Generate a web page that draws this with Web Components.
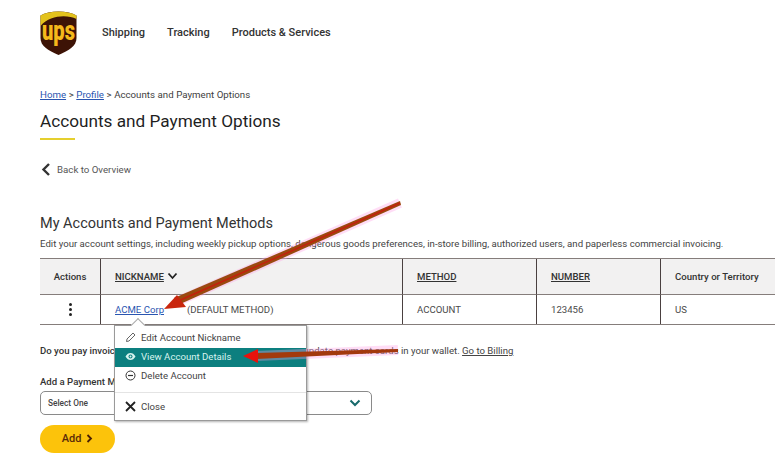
<!DOCTYPE html>
<html lang="en">
<head>
<meta charset="utf-8">
<title>Accounts and Payment Options</title>
<style>
  html, body { margin: 0; padding: 0; background: #fff; overflow: hidden; }
  body { font-family: Roboto, "Liberation Sans", sans-serif; color: #404040; position: relative; width: 775px; height: 476px; }
</style>
</head>
<body>
<ups-header></ups-header>
<page-heading></page-heading>
<accounts-section></accounts-section>
<payment-form></payment-form>
<action-menu></action-menu>
<arrow-overlay></arrow-overlay>

<script>
class UpsHeader extends HTMLElement {
  connectedCallback() {
    this.attachShadow({ mode: 'open' });
    this.shadowRoot.innerHTML = `
      <style>
        :host { display: flex; align-items: center; height: 64px; padding-left: 40px; box-sizing: border-box; }
        svg { width: 37px; height: 44px; margin-top: 1px; flex: none; overflow: visible; }
        nav { display: flex; gap: 22px; margin-left: 25px; font-size: 11px; font-weight: 500; color: #333; }
      </style>
      <svg viewBox="0 0 37 44">
        <path d="M18.500 0.500C11 0.500 5 2 0.500 4.500V27C0.500 35 8 39.500 18.500 44C29 39.500 36.500 35 36.500 27V4.500C32 2 26 0.500 18.500 0.500Z" fill="#3d1306"/>
        <path d="M0.500 4.500C6 1.500 12 0.500 18.500 0.500C25 0.500 31 1.500 36.500 4.500V8C27 3.500 10 4 0.500 15Z" fill="#e3c21c"/>
        <text x="18.500" y="29" text-anchor="middle" font-family="Roboto, sans-serif" font-weight="900" font-size="28" textLength="33" lengthAdjust="spacingAndGlyphs" fill="#f5b81b">ups</text>
      </svg>
      <nav><span>Shipping</span><span>Tracking</span><span>Products &amp; Services</span></nav>
    `;
  }
}

class PageHeading extends HTMLElement {
  connectedCallback() {
    this.attachShadow({ mode: 'open' });
    this.shadowRoot.innerHTML = `
      <style>
        :host { display: block; padding: 24px 0 0 40px; }
        .crumbs { font-size: 9.700px; line-height: 14px; color: #404040; word-spacing: .15px; }
        a { color: #2a55b0; text-decoration: underline; }
        h1 { margin: 6px 0 0; font-size: 17.200px; font-weight: 400; line-height: 26px; color: #1f1f1f; }
        .rule { width: 35px; height: 1.500px; background: #e5cf2e; margin-top: 4px; }
        .back { display: flex; align-items: center; gap: 6px; margin-top: 23px; font-size: 9.700px; line-height: 14px; color: #555; }
        .back svg { width: 10px; height: 13px; margin-left: 1px; }
      </style>
      <div class="crumbs"><a>Home</a> &gt; <a>Profile</a> &gt; Accounts and Payment Options</div>
      <h1>Accounts and Payment Options</h1>
      <div class="rule"></div>
      <div class="back">
        <svg viewBox="0 0 10 13"><path d="M8 1 2.500 6.500 8 12" fill="none" stroke="#333" stroke-width="2.400"/></svg>
        <span>Back to Overview</span>
      </div>
    `;
  }
}

class AccountsSection extends HTMLElement {
  connectedCallback() {
    this.attachShadow({ mode: 'open' });
    this.shadowRoot.innerHTML = `
      <style>
        :host { display: block; padding-top: 37px; margin-left: 40px; }
        h2 { margin: 0; font-size: 14.500px; font-weight: 400; line-height: 20px; color: #333; }
        p { margin: 3px 0 0; font-size: 9.650px; line-height: 14px; color: #444; white-space: nowrap; }
        .table {
          display: grid; grid-template-columns: 60px 302px 134px 124px 115px;
          grid-template-rows: 36px 29px; margin-top: 7px; width: 735px;
          border-top: 1px solid #857d7b; border-bottom: 1px solid #857d7b;
          font-size: 9.600px;
        }
        .cell { display: flex; align-items: center; padding-left: 14px; color: #4a4a4a; box-sizing: border-box; border-left: 1px solid #4a4040; }
        .cell:nth-child(5n+1) { border-left: 0; padding-left: 0; justify-content: center; }
        .head { background: #f2f1f1; font-weight: 500; color: #333; border-bottom: 1px solid #857d7b; }
        .sort { text-decoration: underline; }
        .head svg { width: 11px; height: 8px; margin-left: 3px; }
        a { color: #2a55b0; text-decoration: underline; }
        .note { margin-left: 23px; }
        .dots { display: flex; flex-direction: column; gap: 2px; }
        .dots i { width: 3px; height: 3px; border-radius: 50%; background: #222; }
      </style>
      <h2>My Accounts and Payment Methods</h2>
      <p>Edit your account settings, including weekly pickup options, dangerous goods preferences, in-store billing, authorized users, and paperless commercial invoicing.</p>
      <div class="table">
        <div class="cell head">Actions</div>
        <div class="cell head"><span class="sort">NICKNAME</span><svg viewBox="0 0 11 8"><path d="M1.500 1.500 5.500 6l4-4.500" fill="none" stroke="#222" stroke-width="1.800"/></svg></div>
        <div class="cell head"><span class="sort">METHOD</span></div>
        <div class="cell head"><span class="sort">NUMBER</span></div>
        <div class="cell head">Country or Territory</div>
        <div class="cell"><span class="dots"><i></i><i></i><i></i></span></div>
        <div class="cell"><a>ACME Corp</a><span class="note">(DEFAULT METHOD)</span></div>
        <div class="cell">ACCOUNT</div>
        <div class="cell">123456</div>
        <div class="cell">US</div>
      </div>
    `;
  }
}

class PaymentForm extends HTMLElement {
  connectedCallback() {
    this.attachShadow({ mode: 'open' });
    this.shadowRoot.innerHTML = `
      <style>
        :host { display: block; padding: 19px 0 0 40px; font-size: 9.600px; }
        .note { line-height: 14px; color: #444; white-space: nowrap; }
        .note b { font-weight: 500; color: #333; }
        .note u { color: #444; }
        label { display: block; margin-top: 17px; line-height: 14px; font-weight: 500; color: #333; }
        .select {
          display: flex; align-items: center; justify-content: space-between; width: 332px; height: 24px;
          margin-top: 2px; padding: 0 10px 0 7px; box-sizing: border-box;
          border: 1px solid #8a8a8a; border-radius: 5px; font-size: 8.300px; font-weight: 500; color: #444;
        }
        .select svg { width: 12px; height: 8px; }
        button {
          display: flex; align-items: center; justify-content: center; gap: 5px; width: 75px; height: 28px;
          margin-top: 10px; padding: 0; border: 0; border-radius: 14px; background: #fcc30b;
          font: 500 11px Roboto, sans-serif; color: #5a2a08;
        }
        button svg { width: 7px; height: 9px; }
      </style>
      <div class="note"><b>Do you pay invoices with a credit card?</b> You can add, edit, and update payment cards in your wallet. <u>Go to Billing</u></div>
      <label>Add a Payment Method</label>
      <div class="select"><span>Select One</span><svg viewBox="0 0 12 8"><path d="M1.500 1.500 6 6l4.500-4.500" fill="none" stroke="#17696b" stroke-width="2"/></svg></div>
      <button>Add <svg viewBox="0 0 7 9"><path d="M1.500 1 5 4.500 1.500 8" fill="none" stroke="#4a1f05" stroke-width="1.800"/></svg></button>
    `;
  }
}

class ActionMenu extends HTMLElement {
  connectedCallback() {
    this.attachShadow({ mode: 'open' });
    this.shadowRoot.innerHTML = `
      <style>
        :host {
          position: absolute; left: 114px; top: 325px; width: 193px; height: 96px; box-sizing: border-box;
          background: #fff; border: 1px solid #9a9a9a; box-shadow: 1px 1px 2px rgba(0,0,0,.3);
          font-size: 9.600px; color: #444; display: flex; flex-direction: column; padding-top: 3px;
        }
        .caret {
          position: absolute; left: 18px; top: -6px; width: 9px; height: 9px; background: #fff;
          border-left: 1px solid #aaa; border-top: 1px solid #aaa; transform: rotate(45deg);
        }
        .item { display: flex; align-items: center; gap: 5px; height: 19px; padding: 0 0 2px 10px; box-sizing: border-box; position: relative; }
        .item svg { width: 11px; height: 11px; flex: none; }
        .on { background: #0c7f7f; color: #d8f4ef; }
        hr { border: 0; border-top: 1px solid #e4e4e4; margin: 6px 0 5px; }
      </style>
      <div class="caret"></div>
      <div class="item"><svg viewBox="0 0 11 11"><path d="M1.500 9.500 2 7 8 1l2 2-6 6z" fill="none" stroke="#555" stroke-width=".9"/></svg>Edit Account Nickname</div>
      <div class="item on"><svg viewBox="0 0 11 11"><path d="M.5 5.500C2 3 3.500 2 5.500 2s3.500 1 5 3.500C9 8 7.500 9 5.500 9s-3.500-1-5-3.500z" fill="#d8f4ef"/><circle cx="5.500" cy="5.500" r="2" fill="#0c7f7f"/><circle cx="5.500" cy="5.500" r="1" fill="#d8f4ef"/></svg>View Account Details</div>
      <div class="item"><svg viewBox="0 0 11 11"><circle cx="5.500" cy="5.500" r="4.500" fill="none" stroke="#333" stroke-width="1"/><path d="M3 5.500h5" stroke="#333" stroke-width="1.200"/></svg>Delete Account</div>
      <hr>
      <div class="item"><svg viewBox="0 0 11 11"><path d="M1 1l9 9M10 1l-9 9" stroke="#222" stroke-width="1.800"/></svg>Close</div>
    `;
  }
}

class ArrowOverlay extends HTMLElement {
  connectedCallback() {
    this.attachShadow({ mode: 'open' });
    this.shadowRoot.innerHTML = `
      <style>
        :host { position: absolute; inset: 0; pointer-events: none; display: block; }
        svg { width: 100%; height: 100%; display: block; }
      </style>
      <svg viewBox="0 0 775 476">
        <path d="M400 203 176 302" stroke="#ff9de6" stroke-opacity=".35" stroke-width="10"/>
        <path d="M398 350 256 356" stroke="#ff9de6" stroke-opacity=".35" stroke-width="10"/>
        <path d="M400 201 401 205 178 305 174 298z" fill="#9a4a10"/>
        <path d="M400 203 176 302" stroke="#c4200e" stroke-width="1.500"/>
        <path d="M398 349 398 352 256 359 256 353z" fill="#a3390d"/>
        <path d="M164 309 177 295 186 307z" fill="#c9260d"/>
        <path d="M243 356 258 349 258 363z" fill="#e8120c"/>
      </svg>
    `;
  }
}

customElements.define('ups-header', UpsHeader);
customElements.define('page-heading', PageHeading);
customElements.define('accounts-section', AccountsSection);
customElements.define('payment-form', PaymentForm);
customElements.define('action-menu', ActionMenu);
customElements.define('arrow-overlay', ArrowOverlay);
</script>
</body>
</html>
